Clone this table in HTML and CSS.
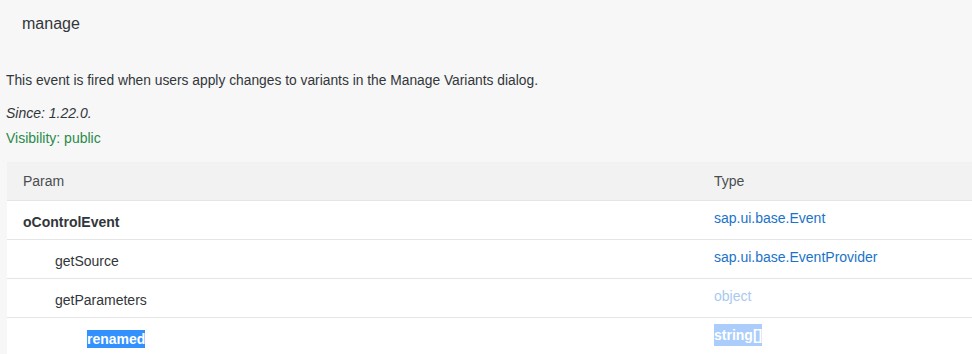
FILE: index.html
```html
<!DOCTYPE html>
<html lang="en">
<head>
<meta charset="utf-8">
<title>manage</title>
<link rel="stylesheet" href="styles.css">
</head>
<body>
<div class="page">
  <h3 class="event-name">manage</h3>
  <p class="desc">This event is fired when users apply changes to variants in the Manage Variants dialog.</p>
  <p class="since">Since: 1.22.0.</p>
  <p class="visibility">Visibility: public</p>
  <table class="params">
    <thead>
      <tr><th class="col-param">Param</th><th class="col-type">Type</th></tr>
    </thead>
    <tbody>
      <tr><td class="name lvl0 strong">oControlEvent</td><td class="type"><a class="link" href="#">sap.ui.base.Event</a></td></tr>
      <tr><td class="name lvl1">getSource</td><td class="type"><a class="link" href="#">sap.ui.base.EventProvider</a></td></tr>
      <tr><td class="name lvl1">getParameters</td><td class="type"><span class="link muted">object</span></td></tr>
      <tr><td class="name lvl2 strong"><span class="sel">renamed</span></td><td class="type"><span class="sel-soft">string[]</span></td></tr>
    </tbody>
  </table>
</div>
</body>
</html>
```
FILE: styles.css
```css
html, body {
  margin: 0;
  padding: 0;
  background: #f7f7f7;
  overflow: hidden;
}

body {
  font-family: "Liberation Sans", Arial, sans-serif;
  font-size: 14px;
  color: #32363a;
}

.page {
  padding-left: 6px;
}

.event-name {
  margin: 0;
  padding: 14px 0 0 16px;
  font-size: 16px;
  font-weight: normal;
  line-height: 20px;
}

.desc {
  margin: 37px 0 0;
  line-height: 20px;
  font-size: 13.8px;
}

.since {
  margin: 12px 0 0;
  line-height: 20px;
  font-style: italic;
}

.visibility {
  margin: 5px 0 0;
  line-height: 20px;
  color: #2b8a4a;
}

.params {
  margin: 14px 0 0 1px;
  width: 965px;
  border-collapse: collapse;
  background: #fff;
}

.params th {
  background: #f2f2f2;
  height: 38px;
  padding: 0 16px;
  text-align: left;
  font-weight: normal;
  color: #4a4d50;
  border-bottom: 1px solid #e5e5e5;
}

.col-param {
  width: 659px;
}

.params td {
  height: 38px;
  padding: 0 16px;
  border-bottom: 1px solid #e5e5e5;
  line-height: 20px;
  vertical-align: middle;
}

/* names sit slightly below the row's centre line */
.params td.name {
  height: 35px;
  padding-top: 3px;
}

.params td.lvl1 { padding-left: 48px; }
.params td.lvl2 { padding-left: 80px; }

/* type links sit a little above the row's centre line */
.type > * {
  display: inline-block;
  margin-bottom: 5px;
}

.strong { font-weight: bold; }

.link {
  color: #1a73c9;
  text-decoration: none;
}

.muted { color: #a9c9ef; }

.sel {
  background: #3391ff;
  color: #fff;
  padding: 1px 0;
}

.sel-soft {
  background: #aacdfb;
  color: #fff;
  font-weight: bold;
  padding: 1px 0;
}
```
